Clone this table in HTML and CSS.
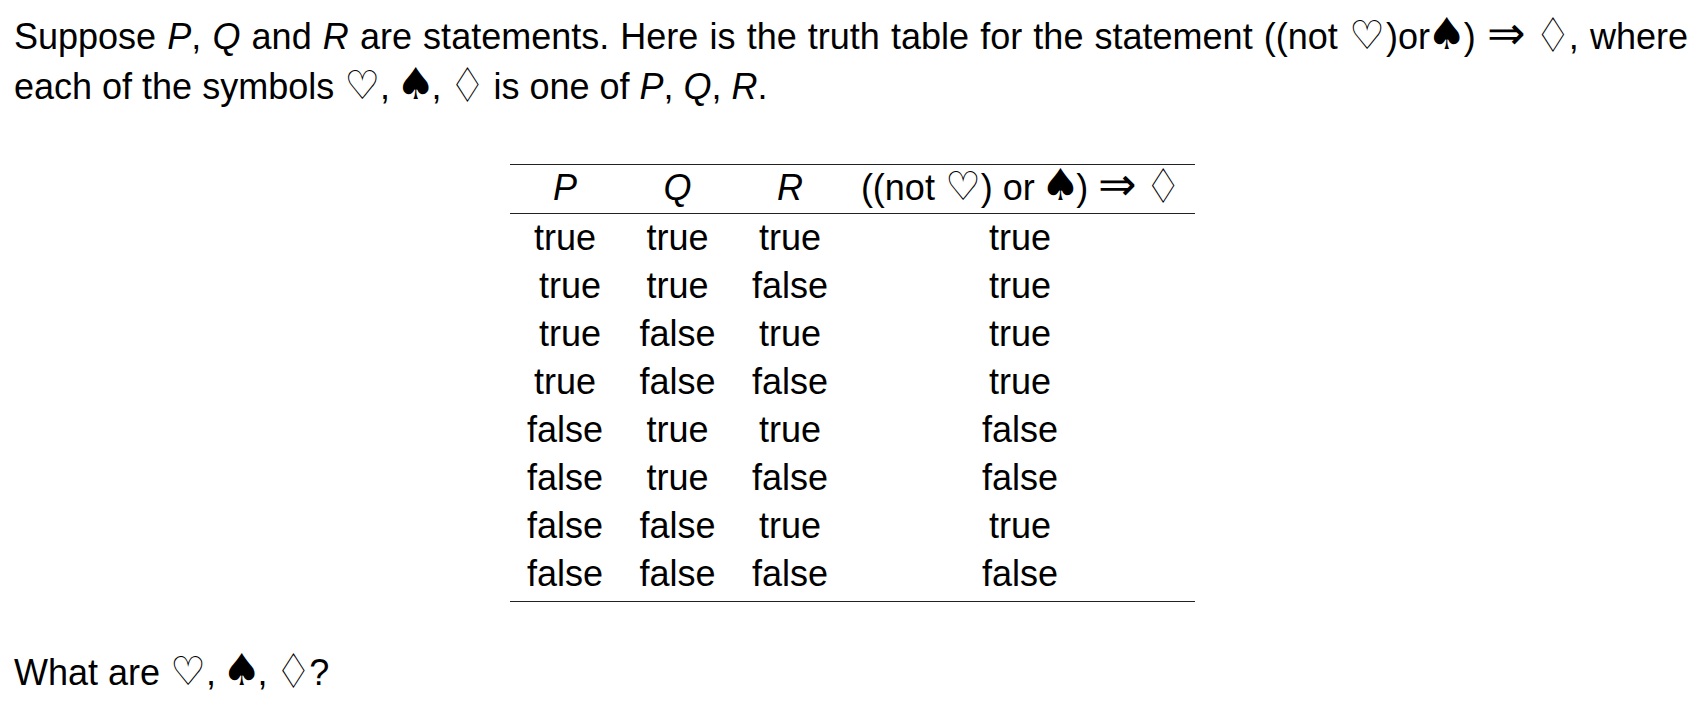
FILE: index.html
```html
<!DOCTYPE html>
<html lang="en">
<head>
<meta charset="utf-8">
<title>Truth table</title>
<link rel="stylesheet" href="styles.css">
</head>
<body>
<main class="page">
  <p class="intro">Suppose <i>P</i>, <i>Q</i> and <i>R</i> are statements. Here is the truth table for the statement ((not <span class="sym">♡</span>)or<span class="sym spade">♠</span>) <span class="arrow">⇒</span> <span class="sym diam">♢</span>, where each of the symbols <span class="sym">♡</span>, <span class="sym spade">♠</span>, <span class="sym diam">♢</span> is one of <i>P</i>, <i>Q</i>, <i>R</i>.</p>
  <div class="table-wrap">
    <table class="truth">
      <thead>
        <tr><th class="c1"><i>P</i></th><th class="c2"><i>Q</i></th><th class="c3"><i>R</i></th><th class="c4">((not <span class="sym">♡</span>) or <span class="sym spade">♠</span>) <span class="arrow">⇒</span> <span class="sym diam">♢</span></th></tr>
      </thead>
      <tbody>
        <tr><td>true</td><td>true</td><td>true</td><td>true</td></tr>
        <tr><td class="nudge">true</td><td>true</td><td>false</td><td>true</td></tr>
        <tr><td class="nudge">true</td><td>false</td><td>true</td><td>true</td></tr>
        <tr><td>true</td><td>false</td><td>false</td><td>true</td></tr>
        <tr><td>false</td><td>true</td><td>true</td><td>false</td></tr>
        <tr><td>false</td><td>true</td><td>false</td><td>false</td></tr>
        <tr><td>false</td><td>false</td><td>true</td><td>true</td></tr>
        <tr><td>false</td><td>false</td><td>false</td><td>false</td></tr>
      </tbody>
    </table>
  </div>
  <p class="question">What are <span class="sym">♡</span>, <span class="sym spade">♠</span>, <span class="sym diam">♢</span>?</p>
</main>
</body>
</html>
```
FILE: styles.css
```css
html, body {
  margin: 0;
  padding: 0;
  background: #fff;
}
body {
  font-family: "Liberation Sans", Arial, sans-serif;
  font-size: 36px;
  color: #000;
}
.page {
  padding: 12px 9px 0 14px;
}
.intro {
  margin: 0;
  line-height: 50px;
  text-align: justify;
}
.sym {
  font-family: "DejaVu Sans", sans-serif;
  font-size: 40px;
  line-height: 0;
}
.spade {
  font-size: 44px;
  margin: 0 -4px;
}
.diam {
  display: inline-block;
  margin: 0 -2px;
  transform: scaleY(1.2);
}
.arrow {
  font-family: "DejaVu Sans", sans-serif;
  font-size: 46px;
  font-weight: 200;
  line-height: 0;
}
.table-wrap {
  display: flex;
  justify-content: center;
  margin-top: 52px;
  padding-left: 3px;
}
.truth {
  border-collapse: collapse;
  border-top: 1.5px solid #222;
  border-bottom: 1.5px solid #222;
}
.truth thead tr {
  border-bottom: 1.5px solid #222;
}
.truth th {
  font-weight: normal;
  line-height: 43px;
  padding: 1px 0 4px 0;
}
.truth td {
  text-align: center;
  line-height: 43px;
  padding: 0 0 5px 0;
}
.truth tbody tr:first-child td {
  padding-top: 2px;
}
.truth tbody tr:last-child td {
  padding-bottom: 6px;
}
.truth .c1 { width: 110px; }
.truth .c2 { width: 115px; }
.truth .c3 { width: 110px; }
.truth .c4 { width: 350px; }
.truth .nudge {
  padding-left: 10px;
}
.question {
  margin: 46px 0 0 0;
  line-height: 50px;
}
```
